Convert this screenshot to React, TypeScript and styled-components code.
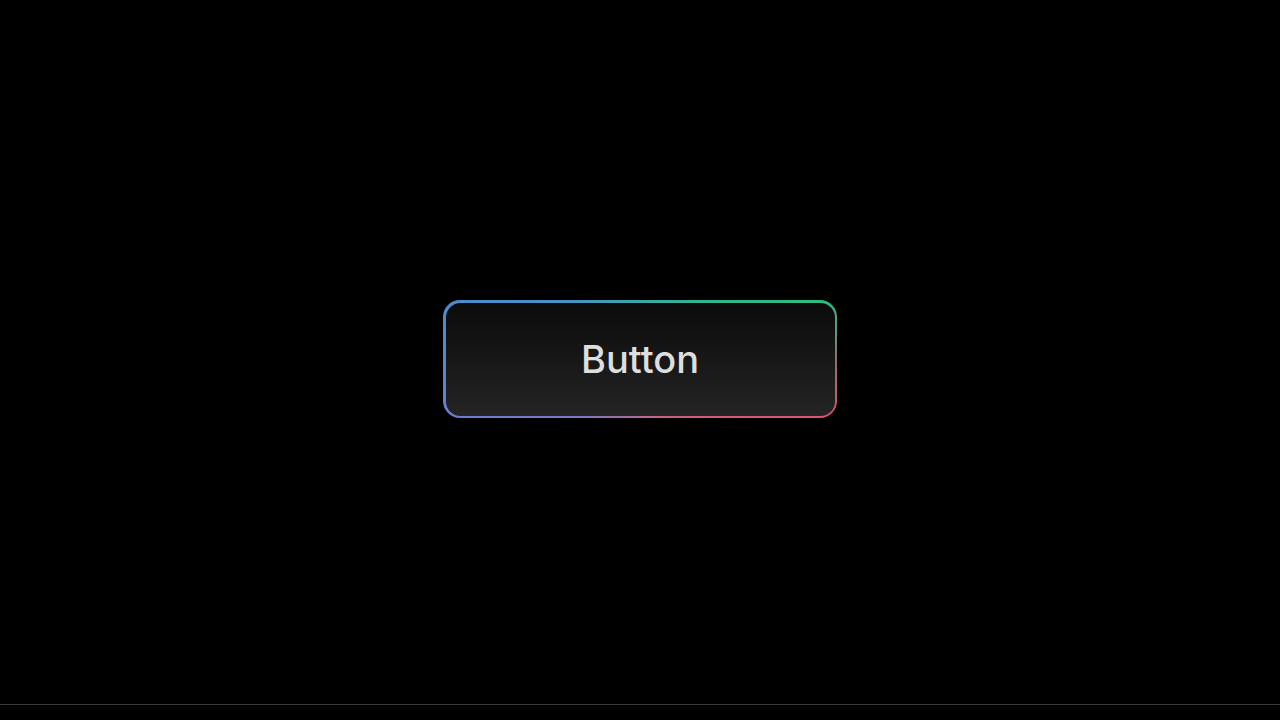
import React from "react";
import styled, { createGlobalStyle } from "styled-components";

const Global = createGlobalStyle`
  html, body {
    margin: 0;
    padding: 0;
    background: #000;
  }
  body {
    font-family: Inter, "Noto Sans", "Liberation Sans", sans-serif;
  }
`;

const Page = styled.div`
  width: 1280px;
  height: 720px;
  display: flex;
  flex-direction: column;
  background: #000;
`;

const Stage = styled.main`
  box-sizing: border-box;
  height: 704px;
  padding-top: 14px;
  display: flex;
  align-items: center;
  justify-content: center;
`;

const Footer = styled.div`
  flex: 1;
  border-top: 1px solid #3a3a3a;
`;

/* Gradient ring drawn as the padded background behind the button face */
const Ring = styled.div`
  box-sizing: border-box;
  width: 394px;
  height: 118px;
  padding: 2.5px;
  border-radius: 17px;
  background: conic-gradient(
    from 0deg at 50% 50%,
    #3aa7a8 0deg,
    #2fba84 73deg,
    #9a6a70 92deg,
    #dc5470 107deg,
    #c2648e 170deg,
    #7c76c8 230deg,
    #6a7ed2 253deg,
    #4a8ccf 287deg,
    #3aa7a8 360deg
  );
`;

const Face = styled.button`
  width: 100%;
  height: 100%;
  border: none;
  border-radius: 14.5px;
  background: linear-gradient(180deg, #0b0b0b 0%, #242424 100%);
  color: #dedede;
  font-family: Inter, "Noto Sans", "Liberation Sans", sans-serif;
  font-size: 38px;
  font-weight: 500;
  cursor: pointer;
  display: flex;
  align-items: center;
  justify-content: center;
  padding: 0;
`;

export default function App() {
  return (
    <>
      <Global />
      <Page>
        <Stage>
          <Ring>
            <Face>Button</Face>
          </Ring>
        </Stage>
        <Footer />
      </Page>
    </>
  );
}
